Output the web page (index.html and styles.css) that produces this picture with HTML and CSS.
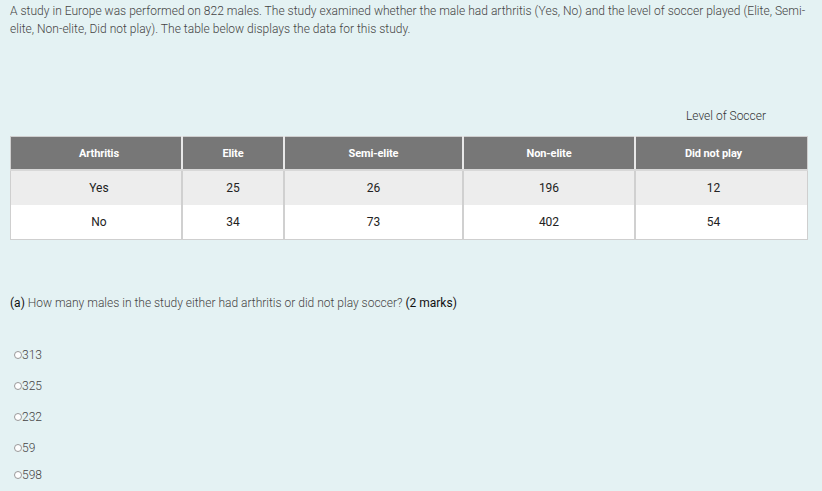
FILE: index.html
```html
<!DOCTYPE html>
<html>
<head>
<meta charset="utf-8">
<link rel="stylesheet" href="styles.css">
</head>
<body>
<div class="page">
  <p class="intro">A study in Europe was performed on 822 males. The study examined whether the male had arthritis (Yes, No) and the level of soccer played (Elite, Semi-elite, Non-elite, Did not play). The table below displays the data for this study.</p>
  <div class="caption">Level of Soccer</div>
  <table class="data">
    <thead>
      <tr><th class="c1">Arthritis</th><th class="c2">Elite</th><th class="c3">Semi-elite</th><th class="c4">Non-elite</th><th class="c5">Did not play</th></tr>
    </thead>
    <tbody>
      <tr class="odd"><td>Yes</td><td>25</td><td>26</td><td>196</td><td>12</td></tr>
      <tr><td>No</td><td>34</td><td>73</td><td>402</td><td>54</td></tr>
    </tbody>
  </table>
  <p class="question"><span class="dark">(a)</span> How many males in the study either had arthritis or did not play soccer? <span class="dark">(2 marks)</span></p>
  <div class="options">
    <label class="opt"><input type="radio" name="q"><span>313</span></label>
    <label class="opt"><input type="radio" name="q"><span>325</span></label>
    <label class="opt"><input type="radio" name="q"><span>232</span></label>
    <label class="opt"><input type="radio" name="q"><span>59</span></label>
    <label class="opt short"><input type="radio" name="q"><span>598</span></label>
  </div>
</div>
</body>
</html>
```
FILE: styles.css
```css
html, body {
  margin: 0;
  padding: 0;
  background: #e4f2f3;
}
body {
  font-family: Roboto, "Open Sans", sans-serif;
  font-weight: 300;
  font-size: 12px;
  color: #444;
}
.page {
  padding: 2px 14px 0 10px;
}
.intro {
  margin: 0;
  line-height: 18px;
  letter-spacing: 0.02px;
}
.caption {
  margin-top: 69px;
  height: 18px;
  line-height: 18px;
  text-align: right;
  padding-right: 42px;
  color: #333;
}
.data {
  margin-top: 11px;
  width: 798px;
  border-collapse: collapse;
  border: 1px solid #cfcfcf;
  table-layout: fixed;
}
.data th {
  background: #777;
  color: #fff;
  font-weight: 700;
  font-size: 11px;
  letter-spacing: -0.1px;
  height: 32px;
  padding: 0;
  border-left: 2px solid #e8e8e8;
  border-bottom: 2px solid #d8d8d8;
}
.data th:first-child { border-left: none; }
.data td {
  text-align: center;
  font-weight: 400;
  color: #222;
  height: 34px;
  padding: 0;
  border-left: 2px solid #d0d0d0;
  background: #fff;
}
.data td:first-child { border-left: none; }
.data th:first-child, .data td:first-child { padding-left: 6px; }
.data th:last-child, .data td:last-child { padding-right: 16px; }
.data tr.odd td { background: #ededed; }
.c1 { width: 164px; }
.c2 { width: 100px; }
.c3 { width: 177px; }
.c4 { width: 170px; }
.question {
  margin: 54px 0 0 0;
  line-height: 18px;
}
.dark { color: #111; font-weight: 400; }
.options {
  margin-top: 34px;
  padding-left: 4px;
  display: flex;
  flex-direction: column;
}
.opt {
  display: flex;
  align-items: center;
  height: 18px;
  margin-bottom: 13px;
  font-size: 12px;
}
.opt.short { margin-top: -4px; }
.opt input {
  appearance: none;
  -webkit-appearance: none;
  width: 8px;
  height: 8px;
  margin: 0;
  border: 1px solid #999;
  border-radius: 50%;
  background: #fff;
  box-sizing: border-box;
}
```
